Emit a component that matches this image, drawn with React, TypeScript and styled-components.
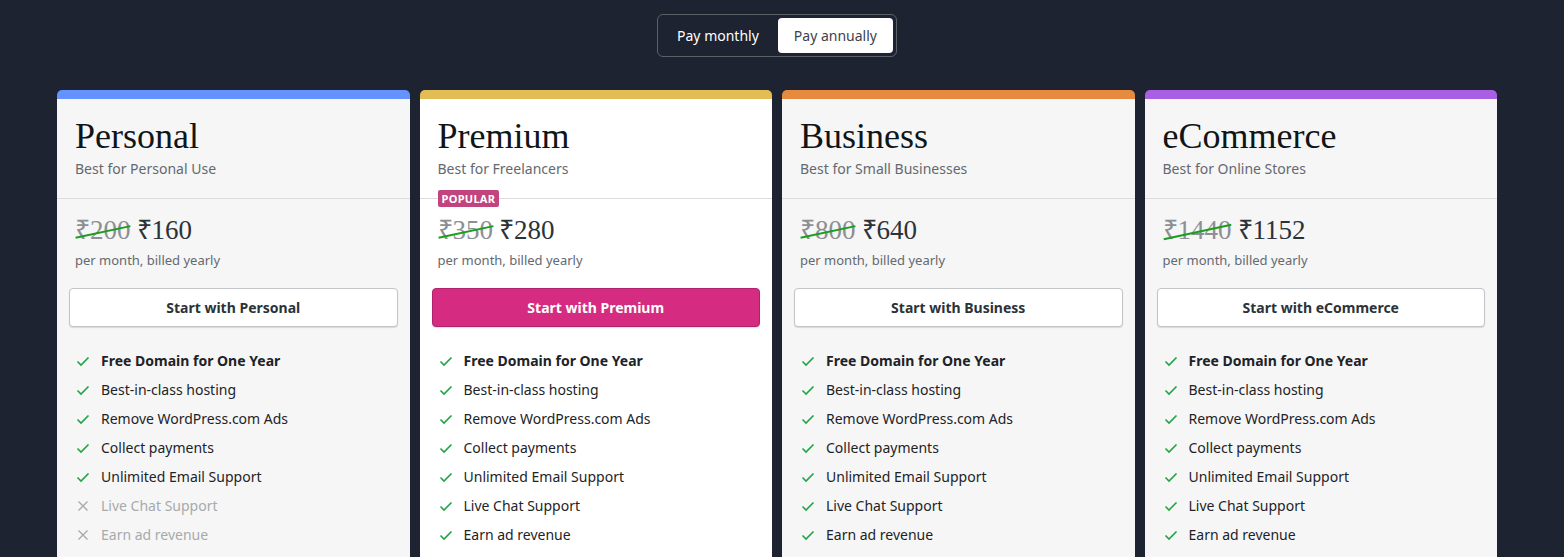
import React from "react";
import styled, { createGlobalStyle } from "styled-components";

const Global = createGlobalStyle`
  html, body { margin: 0; padding: 0; background: #1d2330; }
  body { font-family: "Noto Sans", "Open Sans", sans-serif; overflow: hidden; }
`;

const Page = styled.div`
  background: #1d2330;
  min-height: 557px;
  padding-top: 14px;
  display: flex;
  flex-direction: column;
`;

const ToggleWrap = styled.div`
  align-self: center;
  margin-right: 10px;
  display: flex;
  gap: 3px;
  padding: 3px;
  border: 1px solid #5c6168;
  border-radius: 6px;
`;

const ToggleBtn = styled.button<{ $active?: boolean }>`
  font-family: "Noto Sans", sans-serif;
  font-size: 14px;
  height: 35px;
  padding: 0 16px;
  border: none;
  border-radius: 4px;
  cursor: pointer;
  background: ${(p) => (p.$active ? "#ffffff" : "transparent")};
  color: ${(p) => (p.$active ? "#3c434a" : "#ffffff")};
`;

const Grid = styled.div`
  margin-top: 33px;
  margin-left: 57px;
  width: 1440px;
  display: grid;
  grid-template-columns: repeat(4, 1fr);
  gap: 10px;
`;

const Card = styled.div<{ $accent: string; $bg: string }>`
  background: ${(p) => p.$bg};
  border-top: 9px solid ${(p) => p.$accent};
  border-radius: 5px 5px 0 0;
  display: flex;
  flex-direction: column;
  position: relative;
  padding-bottom: 40px;
`;

const Header = styled.div`
  padding: 17px 18px 19px;
  border-bottom: 1px solid #dcdcde;
  position: relative;
`;

const Title = styled.h2`
  margin: 0;
  font-family: "Liberation Serif", "Times New Roman", serif;
  font-weight: 400;
  font-size: 36px;
  line-height: 40px;
  color: #101517;
`;

const Subtitle = styled.div`
  margin-top: 3px;
  font-size: 14px;
  line-height: 20px;
  color: #646970;
`;

const Badge = styled.span`
  position: absolute;
  left: 18px;
  bottom: -9px;
  background: #c1447f;
  color: #fff;
  font-size: 11px;
  font-weight: 700;
  letter-spacing: 0.3px;
  line-height: 17px;
  padding: 0 4px;
  border-radius: 2px;
`;

const PriceBlock = styled.div`
  padding: 14px 18px 0;
`;

const PriceRow = styled.div`
  display: flex;
  gap: 6px;
  align-items: baseline;
  font-family: "Liberation Serif", "Times New Roman", serif;
  font-size: 27px;
  line-height: 34px;
`;

const OldPrice = styled.span`
  position: relative;
  color: #8c8f94;
  &::after {
    content: "";
    position: absolute;
    left: 0;
    right: 0;
    top: 52%;
    height: 2px;
    background: #1a9e1f;
    transform: rotate(-12deg);
  }
`;

const NewPrice = styled.span`
  color: #2c3338;
`;

const Billing = styled.div`
  margin-top: 4px;
  font-size: 13px;
  line-height: 18px;
  color: #646970;
`;

const Cta = styled.button<{ $primary?: boolean }>`
  margin: 19px 12px 0;
  height: 39px;
  font-family: "Noto Sans", sans-serif;
  font-size: 14px;
  font-weight: 700;
  border-radius: 4px;
  cursor: pointer;
  background: ${(p) => (p.$primary ? "#d52c82" : "#ffffff")};
  color: ${(p) => (p.$primary ? "#ffffff" : "#2c3338")};
  border: 1px solid ${(p) => (p.$primary ? "#b0226b" : "#c3c4c7")};
  box-shadow: 0 1px 1px rgba(0, 0, 0, 0.12);
`;

const Features = styled.ul`
  list-style: none;
  margin: 24px 0 0;
  padding: 0 18px 0 19px;
  display: flex;
  flex-direction: column;
  gap: 9px;
`;

const Feature = styled.li<{ $off?: boolean; $bold?: boolean }>`
  display: flex;
  align-items: center;
  gap: 11px;
  font-size: 14px;
  line-height: 20px;
  font-weight: ${(p) => (p.$bold ? 700 : 400)};
  color: ${(p) => (p.$off ? "#a7aaad" : "#1d2327")};
`;

const IconBox = styled.span`
  width: 14px;
  height: 14px;
  display: flex;
  align-items: center;
  justify-content: center;
  flex: none;
`;

const Check = () => (
  <svg width="14" height="14" viewBox="0 0 14 14">
    <path d="M1.5 7.5 L5 11 L12.5 3.5" fill="none" stroke="#1fa543" strokeWidth="1.6" />
  </svg>
);

const Cross = () => (
  <svg width="14" height="14" viewBox="0 0 14 14">
    <path d="M2.5 2.5 L11.5 11.5 M11.5 2.5 L2.5 11.5" fill="none" stroke="#a7aaad" strokeWidth="1.4" />
  </svg>
);

type Plan = {
  name: string;
  sub: string;
  old: string;
  price: string;
  accent: string;
  bg: string;
  popular?: boolean;
  extras: boolean;
};

const plans: Plan[] = [
  { name: "Personal", sub: "Best for Personal Use", old: "₹200", price: "₹160", accent: "#6492ff", bg: "#f6f6f6", extras: false },
  { name: "Premium", sub: "Best for Freelancers", old: "₹350", price: "₹280", accent: "#e2bd55", bg: "#ffffff", popular: true, extras: true },
  { name: "Business", sub: "Best for Small Businesses", old: "₹800", price: "₹640", accent: "#e68a3f", bg: "#f6f6f6", extras: true },
  { name: "eCommerce", sub: "Best for Online Stores", old: "₹1440", price: "₹1152", accent: "#a95fe3", bg: "#f6f6f6", extras: true },
];

const baseFeatures = [
  "Free Domain for One Year",
  "Best-in-class hosting",
  "Remove WordPress.com Ads",
  "Collect payments",
  "Unlimited Email Support",
];
const extraFeatures = ["Live Chat Support", "Earn ad revenue"];

export default function App() {
  return (
    <Page>
      <Global />
      <ToggleWrap>
        <ToggleBtn>Pay monthly</ToggleBtn>
        <ToggleBtn $active>Pay annually</ToggleBtn>
      </ToggleWrap>
      <Grid>
        {plans.map((p) => (
          <Card key={p.name} $accent={p.accent} $bg={p.bg}>
            <Header>
              <Title>{p.name}</Title>
              <Subtitle>{p.sub}</Subtitle>
              {p.popular && <Badge>POPULAR</Badge>}
            </Header>
            <PriceBlock>
              <PriceRow>
                <OldPrice>{p.old}</OldPrice>
                <NewPrice>{p.price}</NewPrice>
              </PriceRow>
              <Billing>per month, billed yearly</Billing>
            </PriceBlock>
            <Cta $primary={p.popular}>Start with {p.name}</Cta>
            <Features>
              {baseFeatures.map((f, i) => (
                <Feature key={f} $bold={i === 0}>
                  <IconBox><Check /></IconBox>
                  {f}
                </Feature>
              ))}
              {extraFeatures.map((f) => (
                <Feature key={f} $off={!p.extras}>
                  <IconBox>{p.extras ? <Check /> : <Cross />}</IconBox>
                  {f}
                </Feature>
              ))}
            </Features>
          </Card>
        ))}
      </Grid>
    </Page>
  );
}
